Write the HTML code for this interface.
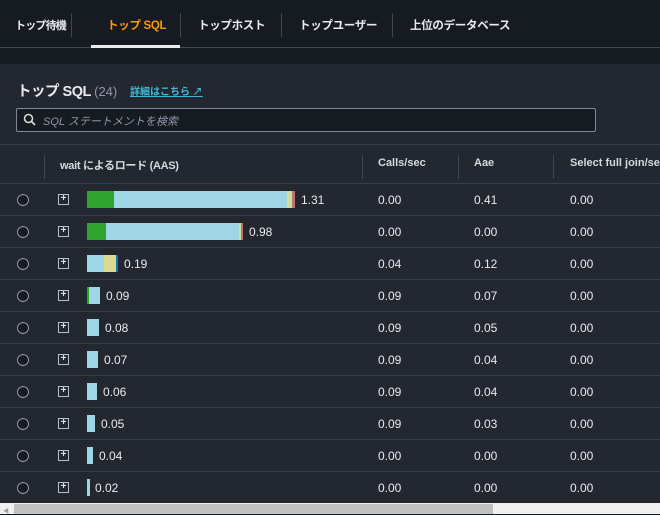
<!DOCTYPE html>
<html><head><meta charset="utf-8"><style>
*{margin:0;padding:0;box-sizing:border-box}
body{width:660px;height:514px;overflow:hidden;background:#161a21;font-family:"Liberation Sans","Noto Sans CJK JP",sans-serif;color:#d5dbdb;position:relative}
.nav{position:absolute;top:0;left:0;width:660px;height:48px;border-bottom:1px solid #414750;background:#161a21}
.tab{position:absolute;top:17px;font-size:11.5px;font-weight:bold;color:#e9ebed;letter-spacing:-0.3px}
.sep{position:absolute;top:13px;width:1px;height:24px;background:#414750}
.panel{position:absolute;top:64px;left:0;width:660px;height:440px;background:#232730}
.t{position:absolute;font-size:11.5px}
.row{position:absolute;left:0;width:660px;height:32px;border-top:1px solid #3a3f47}
.rad{position:absolute;left:17px;top:10px;width:12px;height:12px;border:1.5px solid #8d99a8;border-radius:50%;background:#161a21}
.plus{position:absolute;left:58px;top:10px;width:11px;height:11px;border:1.5px solid #b8c0c8;font-size:10px;line-height:8px;text-align:center;color:#d5dbdb;font-weight:bold}
.bar{position:absolute;top:7px;height:17px;display:flex}
.bar span{display:block;height:100%}
.v{position:absolute;top:9px;font-size:12px;color:#e9ebed}
</style></head><body>
<div class="nav">
<div class="tab" style="left:15px;font-size:11px;letter-spacing:-0.8px">トップ待機</div>
<div class="sep" style="left:71px"></div>
<div class="tab" style="left:107px;color:#ff9900">トップ SQL</div>
<div style="position:absolute;left:91px;top:45px;width:89px;height:3px;background:#e9ebed"></div>
<div class="sep" style="left:180px"></div>
<div class="tab" style="left:198px">トップホスト</div>
<div class="sep" style="left:281px"></div>
<div class="tab" style="left:299px">トップユーザー</div>
<div class="sep" style="left:392px"></div>
<div class="tab" style="left:410px">上位のデータベース</div>
</div>
<div class="panel"></div>
<div class="t" style="left:17px;top:80px;font-size:14.5px;font-weight:bold;color:#e9ebed;letter-spacing:-0.5px">トップ SQL <span style="font-weight:normal;color:#8d99a8;font-size:13px;letter-spacing:0">(24)</span></div>
<div class="t" style="left:130px;top:83px;font-size:10px;color:#44b9d6;text-decoration:underline;font-weight:bold">詳細はこちら ↗</div>
<div style="position:absolute;left:16px;top:108px;width:580px;height:24px;border:1px solid #7d8998;border-radius:2px;background:#161a21"></div>
<svg style="position:absolute;left:23px;top:113px" width="13" height="13" viewBox="0 0 13 13"><circle cx="5.5" cy="5.5" r="4" stroke="#d5dbdb" stroke-width="1.6" fill="none"/><path d="M8.5 8.5L12 12" stroke="#d5dbdb" stroke-width="1.8"/></svg>
<div class="t" style="left:43px;top:113px;color:#8d99a8;font-size:11px;font-style:italic">SQL ステートメントを検索</div>
<div style="position:absolute;left:0;top:144px;width:660px;height:1px;background:#3a3f47"></div>
<div class="sep" style="left:44px;top:155px"></div>
<div class="sep" style="left:362px;top:155px"></div>
<div class="sep" style="left:458px;top:155px"></div>
<div class="sep" style="left:553px;top:155px"></div>
<div class="t" style="left:60px;top:157px;font-weight:bold;color:#d5dbdb;font-size:11px;letter-spacing:-0.3px">wait によるロード (AAS)</div>
<div class="t" style="left:378px;top:157px;font-weight:bold;font-size:11px">Calls/sec</div>
<div class="t" style="left:474px;top:157px;font-weight:bold;font-size:11px">Aae</div>
<div class="t" style="left:570px;top:157px;font-weight:bold;white-space:nowrap;font-size:11px">Select full join/sec</div>

<div class="row" style="top:183px"><div class="rad"></div><div class="plus">+</div><div class="bar" style="left:87px"><span style="width:27px;background:#2ea32e"></span><span style="width:173px;background:#9fd6e6"></span><span style="width:5px;background:#c9e0a0"></span><span style="width:3px;background:#c47070"></span></div><div class="v" style="left:301px">1.31</div><div class="v" style="left:378px">0.00</div><div class="v" style="left:474px">0.41</div><div class="v" style="left:570px">0.00</div></div>
<div class="row" style="top:215px"><div class="rad"></div><div class="plus">+</div><div class="bar" style="left:87px"><span style="width:19px;background:#2ea32e"></span><span style="width:133px;background:#9fd6e6"></span><span style="width:2px;background:#c9e0a0"></span><span style="width:2px;background:#c47070"></span></div><div class="v" style="left:249px">0.98</div><div class="v" style="left:378px">0.00</div><div class="v" style="left:474px">0.00</div><div class="v" style="left:570px">0.00</div></div>
<div class="row" style="top:247px"><div class="rad"></div><div class="plus">+</div><div class="bar" style="left:87px"><span style="width:17px;background:#9fd6e6"></span><span style="width:12px;background:#d9dc90"></span><span style="width:2px;background:#1a6fb0"></span></div><div class="v" style="left:124px">0.19</div><div class="v" style="left:378px">0.04</div><div class="v" style="left:474px">0.12</div><div class="v" style="left:570px">0.00</div></div>
<div class="row" style="top:279px"><div class="rad"></div><div class="plus">+</div><div class="bar" style="left:87px"><span style="width:2px;background:#2ea32e"></span><span style="width:11px;background:#9fd6e6"></span></div><div class="v" style="left:106px">0.09</div><div class="v" style="left:378px">0.09</div><div class="v" style="left:474px">0.07</div><div class="v" style="left:570px">0.00</div></div>
<div class="row" style="top:311px"><div class="rad"></div><div class="plus">+</div><div class="bar" style="left:87px"><span style="width:12px;background:#9fd6e6"></span></div><div class="v" style="left:105px">0.08</div><div class="v" style="left:378px">0.09</div><div class="v" style="left:474px">0.05</div><div class="v" style="left:570px">0.00</div></div>
<div class="row" style="top:343px"><div class="rad"></div><div class="plus">+</div><div class="bar" style="left:87px"><span style="width:11px;background:#9fd6e6"></span></div><div class="v" style="left:104px">0.07</div><div class="v" style="left:378px">0.09</div><div class="v" style="left:474px">0.04</div><div class="v" style="left:570px">0.00</div></div>
<div class="row" style="top:375px"><div class="rad"></div><div class="plus">+</div><div class="bar" style="left:87px"><span style="width:10px;background:#9fd6e6"></span></div><div class="v" style="left:103px">0.06</div><div class="v" style="left:378px">0.09</div><div class="v" style="left:474px">0.04</div><div class="v" style="left:570px">0.00</div></div>
<div class="row" style="top:407px"><div class="rad"></div><div class="plus">+</div><div class="bar" style="left:87px"><span style="width:8px;background:#9fd6e6"></span></div><div class="v" style="left:101px">0.05</div><div class="v" style="left:378px">0.09</div><div class="v" style="left:474px">0.03</div><div class="v" style="left:570px">0.00</div></div>
<div class="row" style="top:439px"><div class="rad"></div><div class="plus">+</div><div class="bar" style="left:87px"><span style="width:6px;background:#9fd6e6"></span></div><div class="v" style="left:99px">0.04</div><div class="v" style="left:378px">0.00</div><div class="v" style="left:474px">0.00</div><div class="v" style="left:570px">0.00</div></div>
<div class="row" style="top:471px"><div class="rad"></div><div class="plus">+</div><div class="bar" style="left:87px"><span style="width:3px;background:#9fd6e6"></span></div><div class="v" style="left:95px">0.02</div><div class="v" style="left:378px">0.00</div><div class="v" style="left:474px">0.00</div><div class="v" style="left:570px">0.00</div></div>

<div style="position:absolute;left:0;top:503px;width:660px;height:11px;background:#f0f0f0"></div>
<div style="position:absolute;left:3px;top:506px;font-size:6px;color:#a0a0a0">◀</div>
<div style="position:absolute;left:14px;top:504px;width:479px;height:10px;background:#c1c1c1"></div>
</body></html>
